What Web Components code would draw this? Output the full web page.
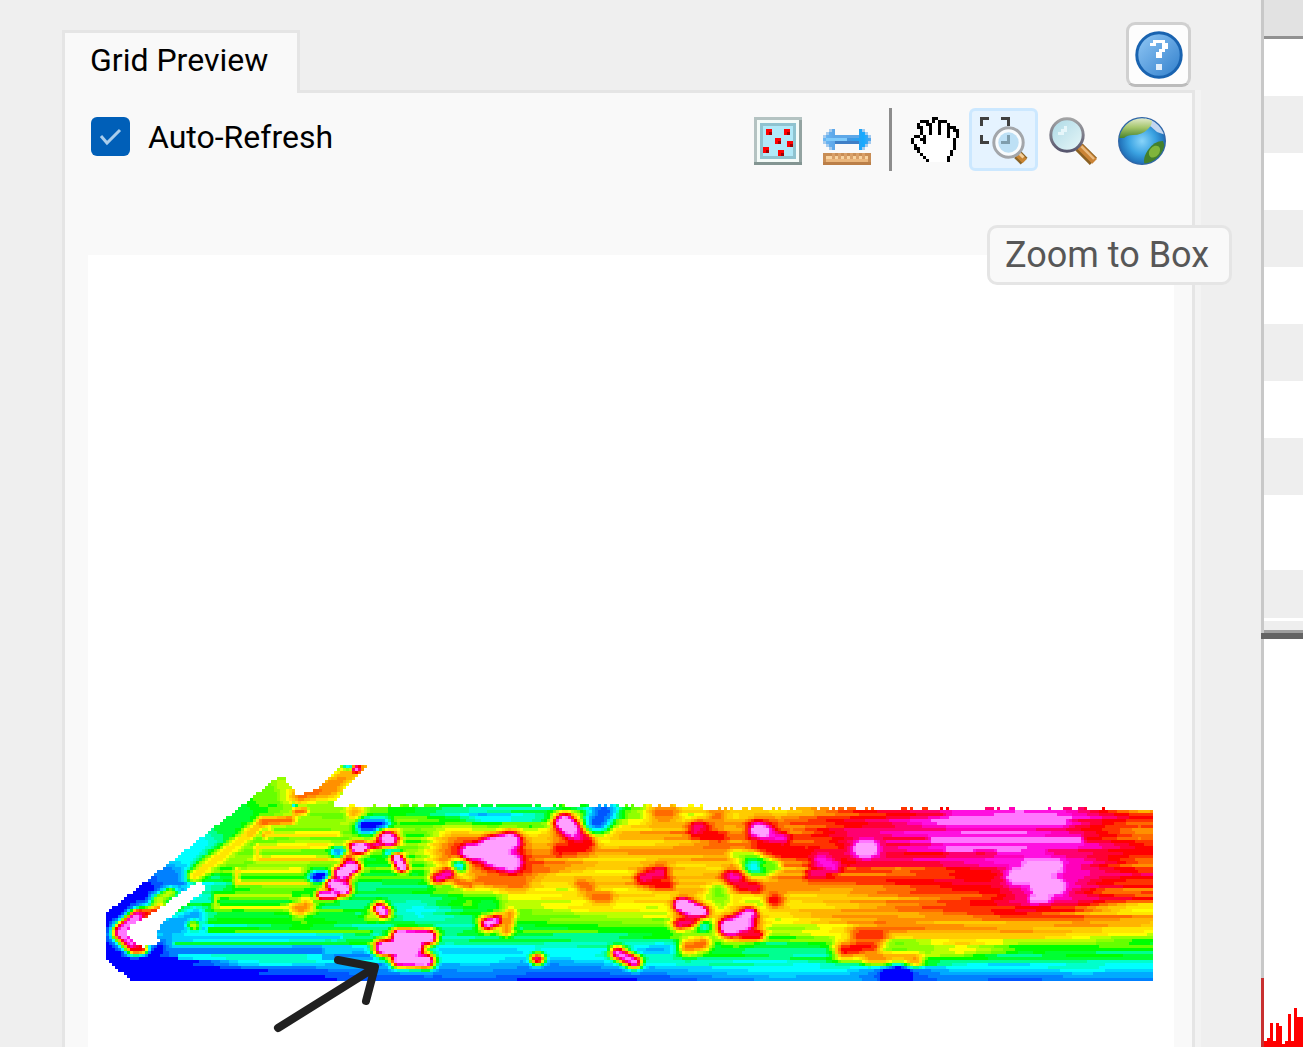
<!DOCTYPE html>
<html lang="en">
<head>
<meta charset="utf-8">
<title>Grid Preview</title>
<style>
html,body{margin:0;height:100%}
body{background:#efefef;font-family:Roboto,"Open Sans",sans-serif;color:#000;overflow:hidden}
</style>
</head>
<body>
<app-window></app-window>
<script>
const make = (name, html, init) => customElements.define(name, class extends HTMLElement {
  constructor() {
    super();
    this.attachShadow({mode: 'open'}).innerHTML = html;
  }
  connectedCallback() { if (init) init(this, this.shadowRoot); }
});

/* ---- icons: 16 by 16 cells, three pixels a cell ---- */
const rects = (list, fill) => list.map(([x, y, w, h]) => `<rect x="${x}" y="${y}" width="${w}" height="${h}" fill="${fill}"/>`).join('');
const bitmap = (rows, fill) => rows.map((r, y) => [...r].map((c, x) => c === '#' ? `<rect x="${x}" y="${y}" width="1" height="1" fill="${fill}"/>` : '').join('')).join('');
const HAND = [
  '.......##.......',
  '...###.#.###....',
  '..#..##..#..#...',
  '..##..#..#..###.',
  '...#..#..#..#.##',
  '...#..#..#..#..#',
  '.##.#.......#..#',
  '#..##.........#.',
  '#...#.........#.',
  '.#............#.',
  '.##...........#.',
  '..#..........#..',
  '...#.........#..',
  '....#.......#...',
  '.....#......#...'];
const ICONS = {
  points: `<rect width="16" height="16" fill="#b4c3c2"/><rect x="15" y="1" width="1" height="15" fill="#93a3a1"/><rect y="15" width="16" height="1" fill="#839592"/>
    <rect x="1" y="1" width="14" height="14" fill="#f4fbf8"/><rect x="2" y="2" width="12" height="12" fill="#8fc3cf"/><rect x="3" y="3" width="10" height="10" fill="#b0e9f8"/>`
    + [[4,4],[10,4],[7,7],[11,8],[3,10],[8,11]].map(([x, y]) => `<rect x="${x}" y="${y}" width="2" height="2" fill="#f00"/><rect x="${x + 1}" y="${y + 1}" width="1" height="1" fill="#a00000"/>`).join(''),
  measure: `<defs><linearGradient id="m" x1="0" x2="1"><stop offset="0" stop-color="#6cb8f5"/><stop offset=".5" stop-color="#4c94db"/><stop offset=".85" stop-color="#17aaff"/><stop offset="1" stop-color="#5aa6ea"/></linearGradient></defs>
    <path d="M0 6h1V5h1V4h2v2h8V4h2v1h1v1h1v3h-1v1h-1v1h-2V9H4v2H2v-1H1V9H0z" fill="url(#m)"/>
    <path d="M4 6h8v1H4z" fill="#5ea8e8"/><path d="M4 8h8v1H4z" fill="#3f7fc6"/><path d="M1 7h7v1H1z" fill="#7fcbfb"/>`
    + rects([[2,4,1,1],[13,4,1,1],[1,5,1,1],[14,5,1,1],[0,6,1,1],[15,6,1,1],[0,8,1,1],[15,8,1,1],[1,9,1,1],[14,9,1,1],[2,10,1,1],[13,10,1,1]], '#a5cbee')
    + `<rect y="12" width="16" height="4" fill="#c88d55"/><rect x="1" y="13" width="14" height="2" fill="#eab67c"/><rect x="1" y="13" width="14" height="1" fill="#f8d3a0"/>` + rects([3,5,7,9,11,13].map(x => [x, 12, 1, 2]), '#d9a068') + rects([[0,15,16,1]], '#bb7f48'),
  pan: `<path d="M3 2h3V1h5v2h3v8l-2 4H6L1 9V7h3z" fill="#fff"/>` + bitmap(HAND, '#000'),
  box: `<path d="M0 0h3v1H1v2H0zM7 0h3v3H9V1H7zM0 6h1v2h2v1H0z" fill="#404040"/>
    <g shape-rendering="auto"><path d="M12.500 12.500l2.200 2.200" stroke="#8a6428" stroke-width="3.200"/><path d="M12.300 12.100l2.600 2.600" stroke="#c88533" stroke-width="2"/><path d="M13 12l1.500 1.500" stroke="#f3cd98"/>
    <circle cx="9.500" cy="8.500" r="4.900" fill="#f8fbfd" stroke="#a3a6aa"/><circle cx="9.500" cy="8.500" r="3.400" fill="#bde0f5"/></g>
    <path d="M9 6h1v3H7V8h2z" fill="#7f9dac"/>`,
  zoom: `<defs><linearGradient id="z" x1="0" y1="0" x2="0" y2="1"><stop offset="0" stop-color="#a2a3a4"/><stop offset="1" stop-color="#57566e"/></linearGradient><linearGradient id="g" x1="0" y1="0" x2="1" y2="1"><stop offset="0" stop-color="#acd9e6"/><stop offset="1" stop-color="#e8f7f8"/></linearGradient></defs>
    <g shape-rendering="auto"><path d="M10 10l4.800 4.800" stroke="#8a6022" stroke-width="3.400"/><path d="M10.200 9.800l5 5" stroke="#cb8436" stroke-width="2.200"/><path d="M10.800 9.800l4.200 4.200" stroke="#eabb80" stroke-width=".8"/>
    <circle cx="6" cy="6" r="5.400" fill="url(#g)" stroke="url(#z)"/></g><path d="M3 5h1V4h1V3h1v2H5v1H3z" fill="#e6f6fa"/>`,
  globe: `<defs><radialGradient id="s" cx=".5" cy=".5" r=".5"><stop offset="0" stop-color="#88d4fa"/><stop offset=".55" stop-color="#3ba3e2"/><stop offset=".9" stop-color="#2376bd"/><stop offset="1" stop-color="#315f9f"/></radialGradient><linearGradient id="n" x1="0" y1="0" x2="0" y2="1"><stop offset="0" stop-color="#e9eed8"/><stop offset=".5" stop-color="#a5c66c"/><stop offset="1" stop-color="#49832c"/></linearGradient><clipPath id="k"><circle cx="8" cy="8" r="7.600"/></clipPath></defs>
    <g shape-rendering="auto"><circle cx="8" cy="8" r="8" fill="url(#s)"/><g clip-path="url(#k)"><path d="M9 0q6 1 7 6l-3-1q-2-2-4-3z" fill="#c3d6ef"/>
    <path d="M0 7Q1 2 5 0h6q1 2-1 4-2 2-5 2-2 0-3 1z" fill="url(#n)"/><path d="M15 8q-3 0-5 3-2 3-1 5 5 0 7-5z" fill="#43802c"/><ellipse cx="12.200" cy="11.400" rx="1.600" ry="2.200" transform="rotate(40 12 11.400)" fill="#7fb53c"/></g></g>`,
  help: `<defs><linearGradient id="h" x1="0" y1="0" x2="1" y2="1"><stop offset="0" stop-color="#93c9f6"/><stop offset="1" stop-color="#2f7ecb"/></linearGradient></defs>
    <g shape-rendering="auto"><circle cx="8" cy="8" r="7.400" fill="url(#h)" stroke="#1963b0"/></g>
    <path d="M6 3h4v1h1v2h-1v1H9v2H7V7h1V6h1V4H7v1H5V4h1z" fill="#fff"/><path d="M7 11h2v2H7z" fill="#e3effa"/>`
};
make('pixel-icon', `<style>:host{display:block;width:48px;height:48px}svg{display:block;width:100%;height:100%}</style><svg viewBox="0 0 16 16" shape-rendering="crispEdges" aria-hidden="true"></svg>`,
  (el, root) => { root.querySelector('svg').innerHTML = ICONS[el.getAttribute('name')]; });

make('tool-button', `<style>
:host{display:block;position:relative}
button{display:grid;place-items:center;box-sizing:border-box;width:69px;height:63px;padding:2px 0 0;border:3px solid transparent;border-radius:6px;background:none}
:host([active]) button{background:#e5f3ff;border-color:#cce8ff}
</style><button type="button"></button><slot></slot>`,
  (el, root) => {
    root.querySelector('button').setAttribute('aria-label', el.getAttribute('label'));
    root.querySelector('button').innerHTML = `<pixel-icon name="${el.getAttribute('icon')}"></pixel-icon>`;
  });

make('tool-tip', `<style>
:host{position:absolute;left:18px;top:117px;z-index:2;box-sizing:border-box;height:60px;padding:0 20px 0 15px;border:3px solid #e5e5e5;border-radius:10px;background:#f9f9f9;color:#575757;font-size:36px;line-height:54px;white-space:nowrap}
</style><slot></slot>`);

make('check-box', `<style>
:host{display:block}
label{display:flex;align-items:center;gap:18px;font-size:32px;line-height:40px}
span{display:grid}
input,svg{grid-area:1/1;width:39px;height:39px;margin:0}
input{appearance:none;border-radius:6px;background:#fff;border:2px solid #888}
input:checked{background:#005fb8;border:0}
svg{pointer-events:none;fill:none;stroke:#a9cdec;stroke-width:3}
</style><label><span><input type="checkbox" checked><svg viewBox="0 0 39 39"><path d="M10 19l6 7 13-13"/></svg></span><slot></slot></label>`);

/* ---- the colour grid ---- */
const PALETTE = ['#0000ff','#0055ff','#0080ff','#00aaff','#00d4ff','#00ffff','#00ffcc','#00ff90','#00ff33','#00ff00','#66ff00','#90ff00','#bbff00','#ffff00','#ffe600','#ffcc00','#ffb400','#ff9000','#ff6a00','#ff3300','#ff0000','#ff0033','#ff0070','#ff00bb','#ff10e0','#ff77ff','#ff9fff'];
/* levels a to z, one column each 60 units from x=120, one row each 9 units from y=808 */
const BASE = [
  'fgklljghjlppstvxwr','fgjllkehlmpqtwyzxt','fgilmjhknpqruwyyws','egjlkkmopqrruwxyvr','ehkmkknppqrrtwyyxu',
  'ejkljlnrqqrstvwxvt','ekkljknroppqswxywr','djkljjlroooqrrvwxvs','dfjkjiloppqrstuuwur','cdjkiilnopoqqsttus',
  'bfijhhkmpoooprtuvtq','bjhjiglmoonoprstrn','agijiehlmllnqqrsrqp','afhighhkllkmorpqrpl','aeghggjjikjknqppon',
  'aefgieghhghijkplkjj','adedcedeedhhgkniiih','aagfedeceghgilhhih','aaabccdccdeffbeefe','aaaabbbaabcddbcbcc'].map(r => r.padEnd(18, r.slice(-1)));
/* strokes: x1 y1 x2 y2 radius level */
const STROKES = [
  [106,915,165,876,14,0],[165,876,180,862,12,2],[183,857,215,835,12,5],[222,828,262,798,14,8],[262,798,281,783,13,10],[281,783,288,800,7,12],
  [106,920,106,960,11,0],[106,965,230,976,10,0],[150,958,160,948,7,0],[168,930,195,915,9,3],
  [195,876,250,833,7,14],[250,833,263,822,5,15],[263,822,290,820,5,18],[158,900,170,893,6,12],[265,835,270,833,4,17],
  [267,835,338,834,3,14],[258,847,350,845,3,14],[258,859,350,859,3,15],[257,847,257,859,3,14],[264,853,330,853,3,10],
  [237,871,300,870,3,13],[237,883,325,884,3,14],[237,871,237,883,3,14],[243,877,310,877,3,9],
  [216,896,290,895,3,12],[216,907,300,907,3,13],[216,896,216,907,3,12],[221,902,285,902,3,8],
  [193,925,194,926,5,12],[210,930,370,932,3,10],[210,921,300,921,3,9],[175,937,340,937,3,4],[175,943,330,943,2,8],[172,951,320,951,4,2],[180,957,320,957,2,7],
  [300,795,330,788,9,18],[330,788,348,774,8,17],[348,774,365,766,5,16],[296,812,304,811,4,18],[347,766,350,766,4,5],[356,769,357,769,4,25],[294,805,295,805,2,4],
  [122,932,140,915,6,19],[140,915,160,910,6,19],[122,934,134,946,8,25],[124,928,136,918,7,25],[137,949,142,949,5,20],
  [355,813,356,813,8,16],[365,826,382,826,8,-1],[317,877,324,877,7,-1],[337,852,340,852,6,3],[390,852,396,852,5,0],
  [362,847,378,845,4,21],[348,858,345,890,5,18],[387,838,389,839,9,28],[397,858,402,867,6,27],[357,848,360,848,7,28],[353,867,341,873,7,28],[333,884,343,889,7,28],[322,895,333,895,5,27],
  [380,909,383,912,7,27],[300,909,306,906,8,17],[370,917,372,917,5,12],
  [460,852,515,866,24,19],[470,852,490,851,8,29],[492,846,510,841,10,29],[494,857,510,862,10,29],[457,866,460,866,7,5],[438,878,448,874,7,23],[457,882,470,885,5,18],
  [572,832,577,835,16,19],[564,822,573,829,9,29],[580,836,586,839,7,25],[560,850,586,846,8,20],[604,812,597,822,13,1],[480,880,520,884,7,18],
  [488,923,496,920,8,26],[506,931,510,914,6,17],[537,959,538,959,6,22],[618,953,634,962,7,25],[582,885,588,888,7,18],[596,897,606,897,7,18],
  [400,936,428,937,8,30],[384,948,414,948,9,30],[400,960,426,961,8,29],
  [485,905,490,905,10,8],[660,813,668,813,12,18],[717,816,718,816,8,18],
  [698,829,700,829,9,23],[706,834,720,837,7,20],[762,832,768,835,14,19],[758,830,764,832,8,28],[774,838,782,839,7,24],[760,850,815,853,9,20],
  [735,855,755,857,6,12],[752,867,760,867,10,5],[766,866,774,866,6,10],[862,849,870,848,18,22],[863,849,869,849,8,29],[822,861,832,866,9,24],[812,874,822,874,6,22],
  [645,878,660,873,9,22],[655,884,668,885,6,20],[732,877,736,878,9,23],[742,886,756,888,7,21],
  [704,903,710,904,7,8],[718,892,720,912,9,10],[750,905,760,905,8,10],[688,907,698,911,14,18],[682,905,700,913,7,30],[680,924,698,920,7,22],[706,927,709,927,8,4],[718,935,728,941,7,6],
  [732,927,745,923,17,19],[730,927,742,925,9,29],[745,918,749,914,7,26],[745,935,758,935,6,21],[773,900,776,900,8,20],[688,947,702,944,9,18],
  [845,950,870,947,10,20],[860,935,880,935,9,19],[870,957,915,960,7,17],
  [955,820,1062,820,8,25],[933,840,1080,840,4,25],[948,849,972,849,4,25],[1000,851,1042,852,4,25],
  [1030,880,1060,880,26,23],[1032,866,1055,866,8,27],[1016,876,1042,876,8,28],[1040,888,1056,887,8,28],[1034,899,1046,898,5,26],
  [893,978,898,974,11,-2]];
const OUTLINE = [[106,913],[278,777],[284,777],[292,788],[297,795],[312,791],[325,783],[342,765],[370,765],[352,783],[342,793],[332,807],[703,807],[703,810],[1153,810],[1153,981],[133,981],[106,960]];
const HOLE = [[142,920],[199,881],[206,889],[160,925],[156,935],[163,942],[144,947],[134,943],[126,933],[130,926]];
const inside = (poly, x, y) => {
  let hit = false;
  for (let i = 0, j = poly.length - 1; i < poly.length; j = i++) {
    const [a, b] = poly[i], [c, d] = poly[j];
    if ((b > y) !== (d > y) && x < (c - a) * (y - b) / (d - b) + a) hit = !hit;
  }
  return hit;
};
const rnd = (a, b) => { const s = Math.sin(a * 127.1 + b * 311.7) * 43758.5453; return s - Math.floor(s); };
const baseLevel = (x, y) => {
  const gx = Math.max(0, Math.min(16.999, (x - 120) / 60)), gy = Math.max(0, Math.min(18.999, (y - 808) / 9));
  const i = Math.floor(gx), j = Math.floor(gy), u = gx - i, v = gy - j;
  const at = (r, c) => BASE[r].charCodeAt(c) - 97;
  return (at(j, i) * (1 - u) + at(j, i + 1) * u) * (1 - v) + (at(j + 1, i) * (1 - u) + at(j + 1, i + 1) * u) * v;
};
const level = (x, y, row) => {
  const k = x / 90 + rnd(row, 9) * 5, i = Math.floor(k), f = k - i, s = f * f * (3 - 2 * f);
  const amp = y > 965 ? 0.6 : 3.4;
  let v = baseLevel(x, y) + (rnd(i, row) * (1 - s) + rnd(i + 1, row) * s - 0.5) * amp;
  for (const [x1, y1, x2, y2, r, to] of STROKES) {
    const dx = x2 - x1, dy = y2 - y1, t = Math.max(0, Math.min(1, ((x - x1) * dx + (y - y1) * dy) / (dx * dx + dy * dy || 1)));
    const d = Math.hypot((x - x1 - t * dx) * (r > 4 ? 0.85 : 1), y - y1 - t * dy) / r;
    if (d < 2.6) v += (to - v) * Math.exp(-Math.pow(d, 2.4));
  }
  return Math.max(0, Math.min(26, Math.round(v)));
};
make('grid-map', `<style>
:host{display:grid;background:#fff}
canvas,svg{grid-area:1/1;display:block;width:100%}
canvas{image-rendering:pixelated}
</style><canvas width="362" height="264" role="img" aria-label="Gridded survey data"></canvas>
<svg viewBox="0 0 1086 792" fill="none" stroke="#202020" stroke-width="8" stroke-linecap="round" stroke-linejoin="round" aria-hidden="true"><path d="M190 773L286 713M250 705l37 7-9 34"/></svg>`,
  (el, root) => {
    const ctx = root.querySelector('canvas').getContext('2d');
    for (let r = 170; r < 242; r++) for (let c = 6; c < 355; c++) {
      const x = 88 + c * 3 + 1.5, y = 255 + r * 3 + 1.5;
      const fringe = (y > 804 && y < 807 && x > 335 && x < 703 && (x > 412 && x < 540 ? rnd(c, 2) > .15 : rnd(c, 2) > .66)) ||
        (y > 807 && y < 810 && x >= 703 && x < 1110 && rnd(c, 4) > (x < 880 ? .5 : .72));
      if (!fringe && (!inside(OUTLINE, x, y) || inside(HOLE, x, y))) continue;
      ctx.fillStyle = PALETTE[level(x, y, r)];
      ctx.fillRect(c, r, 1, 1);
    }
  });

make('preview-panel', `<style>
:host{flex:1;min-width:0;display:flex;flex-direction:column;box-sizing:border-box;padding:22px 66px 0 62px}
header{display:flex;justify-content:space-between;align-items:flex-start;height:68px;padding-right:4px}
h1{box-sizing:border-box;margin:8px 0 0;height:63px;padding:0 29px 0 25px;border:3px solid #e5e5e5;border-bottom:0;background:#f9f9f9;font-size:32px;font-weight:400;line-height:54px;position:relative;white-space:nowrap}
.help{display:grid;place-items:center;box-sizing:border-box;width:65px;height:65px;padding:0;border:3px solid #d0d0d0;border-bottom-color:#bcbcbc;border-radius:9px;background:#fdfdfd}
main{flex:1;border:3px solid #e5e5e5;border-bottom:0;background:#f9f9f9;padding:15px 18px 0 23px;box-shadow:6px 0 #f3f3f3;display:flex;flex-direction:column;gap:84px}
nav{display:flex;align-items:center;justify-content:space-between;height:63px;margin-right:-2px}
.tools{display:flex;align-items:center}
hr{width:3px;height:63px;margin:0 8px;border:0;background:#8d8d8d}
check-box{margin:0 0 6px 3px}
</style>
<header><h1>Grid Preview</h1><button class="help" type="button" aria-label="Help"><pixel-icon name="help"></pixel-icon></button></header>
<main>
<nav><check-box>Auto-Refresh</check-box>
<div class="tools"><tool-button icon="points" label="Show points"></tool-button><tool-button icon="measure" label="Measure"></tool-button><hr>
<tool-button icon="pan" label="Pan"></tool-button><tool-button icon="box" label="Zoom box" active><tool-tip>Zoom to Box</tool-tip></tool-button><tool-button icon="zoom" label="Zoom"></tool-button><tool-button icon="globe" label="Full extent"></tool-button></div></nav>
<grid-map></grid-map>
</main>`);

make('side-table', `<style>
:host{display:flex;flex-direction:column;width:39px;border-left:3px solid #c8c8c8;background:#fff;position:relative}
.head{height:36px;background:#e2e2e2;border-bottom:3px solid #919191}
.row{height:57px}.row.odd{background:#eee}
.row.tall{height:75px}.row.last{height:48px}
.foot{height:9px;margin-top:3px;background:#eee;border-bottom:3px solid #9f9f9f}
.bar{height:6px;background:#646464;margin-left:-3px}
.chart{display:flex;align-items:flex-end;margin-top:auto;margin-left:-3px;height:69px}
.chart i{width:3px;background:#f00}
.chart i:first-child{background:#c83030}
</style>
<div class="head"></div><div class="row"></div><div class="row odd"></div><div class="row"></div><div class="row odd"></div><div class="row"></div><div class="row odd"></div><div class="row"></div><div class="row odd"></div><div class="row tall"></div><div class="row odd last"></div><div class="foot"></div><div class="bar"></div><div class="chart"></div>`,
  (el, root) => { root.querySelector('.chart').innerHTML = [69,6,9,24,6,24,21,3,6,33,6,39,30,30].map(h => `<i style="height:${h}px"></i>`).join(''); });

make('app-window', `<style>:host{display:flex;height:100vh;min-height:100%}</style><preview-panel></preview-panel><side-table></side-table>`);
</script>
</body>
</html>
